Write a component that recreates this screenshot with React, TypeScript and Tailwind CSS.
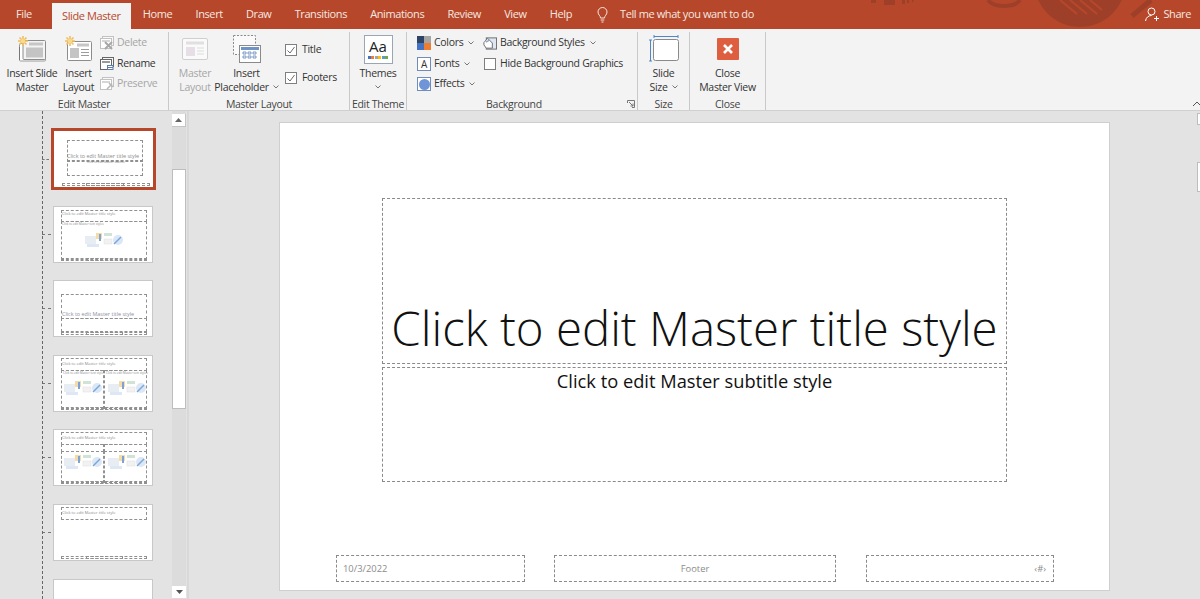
import type { ReactNode } from "react"

const font = { fontFamily: '"Open Sans", "Noto Sans", sans-serif' }

const tabs = ["Home", "Insert", "Draw", "Transitions", "Animations", "Review", "View", "Help"]

function Chevron({ className = "" }: { className?: string }) {
  return (
    <svg width="6" height="4" viewBox="0 0 6 4" className={className}>
      <path d="M0.5 0.5 L3 3 L5.5 0.5" fill="none" stroke="#777" strokeWidth="1" />
    </svg>
  )
}

function Sun({ x, y }: { x: number; y: number }) {
  return (
    <g transform={`translate(${x} ${y})`} stroke="#f0bd5e" strokeWidth="1.6">
      <path d="M5 0V10M0 5H10M1.5 1.5L8.5 8.5M8.5 1.5L1.5 8.5" />
      <circle cx="5" cy="5" r="2.2" fill="#f7d98f" stroke="none" />
    </g>
  )
}

function InsertSlideIcon() {
  return (
    <svg width="30" height="26" viewBox="0 0 30 26">
      <rect x="2.5" y="7.5" width="26" height="17.5" rx="1" fill="#fff" stroke="#9a9a9a" />
      <path d="M2.5 11V24" stroke="#777" />
      <rect x="6" y="4.5" width="22.5" height="19" rx="1" fill="#f4f4f4" stroke="#8c8c8c" />
      <rect x="12" y="6.5" width="14" height="3" fill="#c6c6c6" />
      <rect x="9" y="11.5" width="17" height="10" fill="#c4c4c4" />
      <Sun x={1} y={0} />
    </svg>
  )
}

function InsertLayoutIcon() {
  return (
    <svg width="28" height="26" viewBox="0 0 28 26">
      <rect x="2.5" y="5.5" width="24" height="19" rx="1" fill="#fff" stroke="#8c8c8c" />
      <rect x="12" y="7.5" width="12" height="3" fill="#c6c6c6" />
      <rect x="5" y="12" width="9" height="10" fill="#c4c4c4" />
      <path d="M16 13.5H24M16 16.5H24M16 19.5H24" stroke="#9c9c9c" />
      <Sun x={0} y={0} />
    </svg>
  )
}

function SmallSlideIcon({ mark, dim }: { mark: "x" | "rename" | "pin"; dim?: boolean }) {
  const line = dim ? "#c2c2c2" : "#666"
  return (
    <svg width="14" height="14" viewBox="0 0 14 14">
      <rect x="2.5" y="0.5" width="11" height="9" fill="#f8f8f8" stroke={line} />
      <rect x="0.5" y="2.5" width="11" height="10" fill="#fff" stroke={line} />
      <rect x="2" y="4" width="8" height="2" fill={dim ? "#d6d6d6" : "#9a9a9a"} />
      {mark === "x" && <path d="M5 6L12 13M12 6L5 13" stroke="#a8a8a8" strokeWidth="2" />}
      {mark === "rename" && (
        <>
          <rect x="7" y="8" width="6.5" height="5" fill="#5b7fa8" />
          <path d="M8 9.5H12.5M8 11.5H12.5" stroke="#fff" />
        </>
      )}
      {mark === "pin" && <path d="M7 12L12 7M9 6L13 10" stroke="#b5b5b5" strokeWidth="1.5" />}
    </svg>
  )
}

function MasterLayoutIcon() {
  return (
    <svg width="26" height="22" viewBox="0 0 26 22">
      <rect x="0.5" y="0.5" width="25" height="21" rx="1.5" fill="#fafafa" stroke="#cfcfcf" />
      <rect x="4" y="3.5" width="18" height="3" fill="#e2dfe2" />
      <rect x="4" y="9" width="9" height="9" fill="#e6e0e6" />
      <path d="M15 10H22M15 13H22M15 16H22" stroke="#dcdcdc" />
    </svg>
  )
}

function PlaceholderIcon() {
  return (
    <svg width="28" height="28" viewBox="0 0 28 28">
      <rect x="0.5" y="0.5" width="22" height="19" fill="#fafafa" stroke="#8a8a8a" strokeDasharray="2 1.5" />
      <rect x="6.5" y="10.5" width="21" height="17" fill="#fff" stroke="#8a8a8a" />
      <rect x="8" y="12" width="18" height="3" fill="#6f93c4" />
      <path d="M10 17H13V19H10ZM15 17H18V19H15ZM20 17H23V19H20ZM10 21H13V23H10ZM15 21H18V23H15ZM20 21H23V23H20Z" fill="#fff" stroke="#5d84bb" strokeWidth="0.8" />
    </svg>
  )
}

function CheckBox({ checked }: { checked?: boolean }) {
  return (
    <svg width="12" height="12" viewBox="0 0 12 12" className="shrink-0">
      <rect x="0.5" y="0.5" width="11" height="11" fill="#fff" stroke="#7f7f7f" />
      {checked && <path d="M2.5 6.5L5 9L9.5 3" fill="none" stroke="#6b6b6b" />}
    </svg>
  )
}

function ThemesIcon() {
  const dots = ["#4472c4", "#ed7d31", "#a5a5a5", "#ffc000", "#5b9bd5", "#70ad47"]
  return (
    <div className="w-[29px] h-[29px] border border-[#9aa5b5] bg-white flex flex-col items-center tracking-normal">
      <span className="text-[15px] leading-[18px] mt-[1px] text-[#222]">Aa</span>
      <div className="flex gap-[0.5px] mt-[1px]">
        {dots.map((c) => (
          <span key={c} className="w-[3px] h-[3px]" style={{ backgroundColor: c }} />
        ))}
      </div>
    </div>
  )
}

function ColorsIcon() {
  return (
    <svg width="14" height="14" viewBox="0 0 14 14">
      <rect width="7" height="7" fill="#2f4464" />
      <rect x="7" width="7" height="7" fill="#a5a5a5" />
      <rect y="7" width="7" height="7" fill="#4472c4" />
      <rect x="7" y="7" width="7" height="7" fill="#ed7d31" />
    </svg>
  )
}

function BackgroundStylesIcon() {
  return (
    <svg width="15" height="15" viewBox="0 0 15 15">
      <rect x="3.5" y="1.5" width="11" height="12" fill="#dfe7f2" stroke="#6a6a6a" />
      <path d="M1 6.5L5 2L10 7V12.5H3.5L1 9Z" fill="#fff" stroke="#666" />
      <path d="M3 6L7 4" stroke="#8aa6cc" strokeWidth="1.5" />
    </svg>
  )
}

function SlideSizeIcon() {
  return (
    <svg width="30" height="28" viewBox="0 0 30 28">
      <path d="M5 1.5H29M5 0V3M29 0V3M1.5 5V26M0 5H3M0 26H3" stroke="#4f86c6" fill="none" />
      <rect x="4.5" y="4.5" width="25" height="21" rx="2" fill="#fff" stroke="#8a8a8a" />
    </svg>
  )
}

function CloseIcon() {
  return (
    <svg width="22" height="22" viewBox="0 0 22 22">
      <rect width="22" height="22" rx="1" fill="#dd5f3f" />
      <path d="M7 7L15 15M15 7L7 15" stroke="#fff" strokeWidth="2.6" />
    </svg>
  )
}

function Group({ label, width, children, launcher }: { label: string; width: number; children: ReactNode; launcher?: boolean }) {
  return (
    <div className="relative flex flex-col shrink-0 h-[78px] mt-[3px] border-r border-[#c9c9c9]" style={{ width }}>
      <div className="flex flex-1 min-h-0">{children}</div>
      <div className={`h-[12px] text-center leading-[12px] whitespace-nowrap text-[10.5px] text-[#444] ${launcher ? "pr-[16px]" : ""}`}>{label}</div>
      {launcher && (
        <svg width="8" height="8" viewBox="0 0 8 8" className="absolute right-[2px] bottom-[2px]">
          <path d="M0.5 3V0.5H7.5V7.5H5M2 2L6 6M6 3.5V6H3.5" fill="none" stroke="#777" />
        </svg>
      )}
    </div>
  )
}

function BigButton({ icon, lines, width, dim, chevron, className = "" }: { icon: ReactNode; lines: string[]; width: number; dim?: boolean; chevron?: boolean; className?: string }) {
  return (
    <div className={`flex flex-col items-center shrink-0 leading-[14px] text-[10.5px] ${dim ? "text-[#a6a6a6]" : "text-[#333]"} ${className}`} style={{ width }}>
      <div className="flex items-center justify-center w-full h-[34px]">{icon}</div>
      {lines.map((l, i) => (
        <div key={l} className="whitespace-nowrap flex items-center gap-[4px]">
          {l}
          {chevron && i === lines.length - 1 && <Chevron />}
        </div>
      ))}
    </div>
  )
}

function SmallRow({ icon, label, dim, chevron }: { icon: ReactNode; label: string; dim?: boolean; chevron?: boolean }) {
  return (
    <div className={`flex items-center h-[20.5px] text-[10.5px] whitespace-nowrap ${dim ? "text-[#a6a6a6]" : "text-[#333]"}`}>
      <span className="flex items-center justify-center w-[14px] mr-[3px]">{icon}</span>
      {label}
      {chevron && <Chevron className="ml-[5px]" />}
    </div>
  )
}

function Ribbon() {
  return (
    <div className="flex h-[82px] bg-[#f3f3f3] border-b border-[#d0d0d0] tracking-[-0.3px]">
      <Group label="Edit Master" width={169}>
        <div className="ml-[4px] flex">
          <BigButton width={56} icon={<InsertSlideIcon />} lines={["Insert Slide", "Master"]} />
          <BigButton width={37} icon={<InsertLayoutIcon />} lines={["Insert", "Layout"]} />
        </div>
        <div className="ml-[3px] pt-[1px] flex flex-col">
          <SmallRow dim icon={<SmallSlideIcon mark="x" dim />} label="Delete" />
          <SmallRow icon={<SmallSlideIcon mark="rename" />} label="Rename" />
          <SmallRow dim icon={<SmallSlideIcon mark="pin" dim />} label="Preserve" />
        </div>
      </Group>
      <Group label="Master Layout" width={181}>
        <BigButton dim width={46} className="ml-[3px]" icon={<MasterLayoutIcon />} lines={["Master", "Layout"]} />
        <BigButton width={63} className="-ml-[3px]" chevron icon={<PlaceholderIcon />} lines={["Insert", "Placeholder"]} />
        <div className="ml-[7px] flex flex-col pt-[8px] gap-[8px] text-[10.5px] text-[#333]">
          <div className="flex items-center gap-[5px] h-[20px]"><CheckBox checked />Title</div>
          <div className="flex items-center gap-[5px] h-[20px]"><CheckBox checked />Footers</div>
        </div>
      </Group>
      <Group label="Edit Theme" width={57}>
        <div className="w-full flex flex-col items-center text-[10.5px] leading-[14px] text-[#333]">
          <div className="h-[34px] flex items-center"><ThemesIcon /></div>
          Themes
          <Chevron className="mt-[5px]" />
        </div>
      </Group>
      <Group label="Background" width={231} launcher>
        <div className="ml-[10px] pt-[1px] w-[66px] flex flex-col">
          <SmallRow chevron icon={<ColorsIcon />} label="Colors" />
          <SmallRow
            chevron
            icon={
              <span className="w-[14px] h-[14px] border border-[#6f8db8] bg-white text-[10px] leading-[12px] text-center text-[#333]">A</span>
            }
            label="Fonts"
          />
          <SmallRow
            chevron
            icon={
              <span className="w-[14px] h-[14px] border border-[#6f8db8] bg-white flex items-center justify-center">
                <span className="w-[11px] h-[11px] rounded-full bg-[#6f94d8]" />
              </span>
            }
            label="Effects"
          />
        </div>
        <div className="pt-[1px] flex flex-col">
          <SmallRow chevron icon={<BackgroundStylesIcon />} label="Background Styles" />
          <SmallRow icon={<CheckBox />} label="Hide Background Graphics" />
        </div>
      </Group>
      <Group label="Size" width={52}>
        <BigButton width={51} chevron icon={<SlideSizeIcon />} lines={["Slide", "Size"]} />
      </Group>
      <Group label="Close" width={76}>
        <BigButton width={75} icon={<CloseIcon />} lines={["Close", "Master View"]} />
      </Group>
      <div className="flex-1 relative">
        <svg width="8" height="6" viewBox="0 0 8 6" className="absolute right-0 bottom-[3px]">
          <path d="M1 5L5 1L9 5" fill="none" stroke="#555" />
        </svg>
      </div>
    </div>
  )
}

function TitleBar() {
  return (
    <div className="relative flex items-end h-[29px] bg-[#b7472a] text-[11px] tracking-[-0.4px] text-[#f6e7e1] overflow-hidden">
      {/* pattern behind the tabs */}
      <svg width="330" height="29" viewBox="0 0 330 29" className="absolute left-[870px] top-0">
        <g fill="#9e4029">
          <rect x="14" y="0" width="11" height="5" />
          <rect x="1" y="0" width="5" height="3" />
          <rect x="32" y="0" width="3" height="4" />
          <rect x="37" y="0" width="2" height="3" />
          <rect x="42" y="0" width="1.5" height="2" />
        </g>
        <path d="M118 0A17 9 0 0 0 150 0" fill="none" stroke="#9e4029" strokeWidth="4" />
        <circle cx="210" cy="-19" r="46" fill="#9e4029" />
        <path d="M190 0L207 14M200 0L217 14M210 0L227 14M220 0L232 10" stroke="#b7472a" strokeWidth="2" />
        <path d="M262 16L281 0" stroke="#9e4029" strokeWidth="5" />
      </svg>
      <div className="relative flex items-center h-[29px]">
        <div className="pl-[16px] pr-[20px]">File</div>
        <div className="flex items-center justify-center self-end h-[26px] w-[79px] bg-[#f3f3f3] text-[#b7472a]">Slide Master</div>
        <div className="flex ml-[12px] gap-[23.2px]">
          {tabs.map((t) => (
            <div key={t}>{t}</div>
          ))}
        </div>
        <svg width="11" height="16" viewBox="0 0 11 16" className="ml-[25px]">
          <path d="M3.5 11C3.5 8.5 1 8 1 5A4.5 4.5 0 0 1 10 5C10 8 7.5 8.5 7.5 11ZM3.7 13H7.3M4.5 15H6.5" fill="none" stroke="#f6e7e1" />
        </svg>
        <div className="ml-[12px]">Tell me what you want to do</div>
      </div>
      <div className="relative ml-auto mr-[9px] flex items-center gap-[4px] h-[29px]">
        <svg width="14" height="15" viewBox="0 0 14 15">
          <circle cx="6.5" cy="4.5" r="3.5" fill="none" stroke="#fff" />
          <path d="M0.5 14C1 10.5 3.5 8.5 6.5 8.5M9 11.5H14M11.5 9V14" fill="none" stroke="#fff" />
        </svg>
        Share
      </div>
    </div>
  )
}

function Box({ className }: { className: string }) {
  return <div className={`absolute border border-dashed border-[#909090] ${className}`} />
}

function MiniPicture({ className }: { className: string }) {
  return (
    <svg width="38" height="16" viewBox="0 0 38 16" className={`absolute ${className}`}>
      <rect x="0" y="4" width="11" height="8" fill="#e8edf4" />
      <rect x="11" y="1" width="6" height="6" fill="#f3dca6" />
      <rect x="14" y="2" width="2" height="7" fill="#7da3d6" />
      <rect x="19" y="1" width="8" height="3" fill="#cfe3d6" />
      <rect x="19" y="7" width="8" height="5" fill="#f2f2f2" stroke="#ddd" strokeWidth="0.5" />
      <circle cx="33" cy="8" r="5" fill="#dbe7f5" />
      <path d="M29 12L36 5" stroke="#79a6dc" strokeWidth="1.5" />
      <rect x="2" y="12" width="12" height="3" fill="#dde8f4" />
    </svg>
  )
}

function MiniText({ className, children }: { className: string; children: string }) {
  return <div className={`absolute whitespace-nowrap text-[#8a8a8a] ${className}`}>{children}</div>
}

function MiniFooter() {
  return (
    <>
      <Box className="left-[7px] right-[5px] bottom-[1px] h-[3px]" />
      <Box className="left-[32px] w-[37px] bottom-[1px] h-[3px]" />
    </>
  )
}

const miniTitle = "Click to edit Master title style"
const miniBody = "Click to edit Master text styles"

function Thumb({ variant }: { variant: number }) {
  return (
    <div className="relative w-[100px] h-[57px] shrink-0 bg-white border border-[#c8c8c8]">
      {variant === 1 && (
        <>
          <Box className="left-[7px] right-[5px] top-[3px] h-[12px]" />
          <MiniText className="left-[8px] top-[4px] text-[4px]">{miniTitle}</MiniText>
          <Box className="left-[7px] right-[5px] top-[14px] bottom-[2px]" />
          <MiniText className="left-[8px] top-[15px] text-[3px]">{miniBody}</MiniText>
          <MiniPicture className="left-[31px] top-[25px]" />
          <MiniFooter />
        </>
      )}
      {variant === 2 && (
        <>
          <Box className="left-[7px] right-[5px] top-[13px] h-[25px]" />
          <MiniText className="left-[8px] top-[29px] text-[5.4px] text-[#8d8fa0]">{miniTitle}</MiniText>
          <Box className="left-[7px] right-[5px] top-[37px] h-[14px]" />
          <MiniFooter />
        </>
      )}
      {variant === 3 && (
        <>
          <Box className="left-[7px] right-[5px] top-[2px] h-[13px]" />
          <MiniText className="left-[8px] top-[5px] text-[4px]">{miniTitle}</MiniText>
          <Box className="left-[7px] w-[43px] top-[14px] bottom-[2px]" />
          <Box className="left-[50px] right-[5px] top-[14px] bottom-[2px]" />
          <MiniText className="left-[9px] top-[15px] text-[3px]">{miniBody}</MiniText>
          <MiniText className="left-[52px] top-[15px] text-[3px]">{miniBody}</MiniText>
          <MiniPicture className="left-[10px] top-[24px]" />
          <MiniPicture className="left-[54px] top-[24px]" />
          <MiniFooter />
        </>
      )}
      {variant === 4 && (
        <>
          <Box className="left-[7px] right-[5px] top-[2px] h-[13px]" />
          <MiniText className="left-[8px] top-[5px] text-[4px]">{miniTitle}</MiniText>
          <Box className="left-[7px] w-[43px] top-[14px] h-[8px]" />
          <Box className="left-[50px] right-[5px] top-[14px] h-[8px]" />
          <Box className="left-[7px] w-[43px] top-[21px] bottom-[2px]" />
          <Box className="left-[50px] right-[5px] top-[21px] bottom-[2px]" />
          <MiniPicture className="left-[10px] top-[24px]" />
          <MiniPicture className="left-[54px] top-[24px]" />
          <MiniFooter />
        </>
      )}
      {variant === 5 && (
        <>
          <Box className="left-[7px] right-[5px] top-[2px] h-[13px]" />
          <MiniText className="left-[8px] top-[5px] text-[4px]">{miniTitle}</MiniText>
          <MiniFooter />
        </>
      )}
    </div>
  )
}

function ThumbRow({ children, tick = 11, className = "" }: { children: ReactNode; tick?: number; className?: string }) {
  return (
    <div className={`flex items-center ${className}`}>
      <div className="shrink-0 pr-[2px]" style={{ width: tick }}>
        <div className="border-t border-dashed border-[#777]" />
      </div>
      {children}
    </div>
  )
}

function ThumbPanel() {
  return (
    <div className="relative w-[172px] shrink-0 overflow-hidden">
      <div className="absolute left-[42px] top-0 bottom-0 border-l border-dashed border-[#666]" />
      <div className="flex flex-col gap-[17.6px] pl-[42px] pt-[17px]">
        <ThumbRow tick={9} className="-mb-[2px]">
          <div className="relative w-[105px] h-[62px] border-[3px] border-[#b7472a] bg-white shrink-0">
            <Box className="left-[13px] w-[76px] top-[9px] h-[36px]" />
            <Box className="left-[13px] w-[76px] top-[29px] h-[0px]" />
            <MiniText className="left-[13px] top-[21px] text-[5.4px]">{miniTitle}</MiniText>
            <MiniText className="left-[33px] top-[29px] text-[3px]">Click to edit Master subtitle</MiniText>
            <Box className="left-[8px] w-[88px] bottom-[1px] h-[3px]" />
            <Box className="left-[32px] w-[38px] bottom-[1px] h-[3px]" />
          </div>
        </ThumbRow>
        {[1, 2, 3, 4, 5].map((v) => (
          <ThumbRow key={v}><Thumb variant={v} /></ThumbRow>
        ))}
        <ThumbRow><div className="w-[100px] h-[57px] shrink-0 bg-white border border-[#c8c8c8]" /></ThumbRow>
      </div>
    </div>
  )
}

function ThumbScroll() {
  return (
    <div className="flex flex-col w-[14px] h-full shrink-0 bg-[#dcdcdc]">
      <div className="mt-[3px] h-[13px] bg-white border-r border-b border-[#c4c4c4] flex items-center justify-center">
        <svg width="7" height="4" viewBox="0 0 7 4"><path d="M0 4L3.5 0L7 4Z" fill="#666" /></svg>
      </div>
      <div className="mt-[42px] h-[240px] bg-white border border-[#bdbdbd]" />
      <div className="mt-auto mb-[1px] h-[12px] bg-white flex items-center justify-center">
        <svg width="7" height="4" viewBox="0 0 7 4"><path d="M0 0L3.5 4L7 0Z" fill="#555" /></svg>
      </div>
    </div>
  )
}

function SlideCanvas() {
  return (
    <div className="flex-1 min-w-0 pt-[11px] pl-[90px] bg-[#e3e3e3]">
      <div className="relative w-[831px] h-[469px] bg-white border border-[#cfcfcf]">
        <div className="absolute left-[102px] top-[75px] w-[625px] h-[166px] border border-dashed border-[#8a8a8a] flex items-end justify-center overflow-hidden">
          <span className="text-[47.4px] font-light leading-[70px] whitespace-nowrap text-[#111]">Click to edit Master title style</span>
        </div>
        <div className="absolute left-[102px] top-[244px] w-[625px] h-[115px] border border-dashed border-[#8a8a8a] text-center text-[18.3px] leading-[26px] text-[#111]">
          Click to edit Master subtitle style
        </div>
        <div className="absolute left-[56px] top-[432px] w-[189px] h-[27px] border border-dashed border-[#8a8a8a] pl-[6px] text-[9.4px] leading-[25px] text-[#8c8c8c]">10/3/2022</div>
        <div className="absolute left-[274px] top-[432px] w-[282px] h-[27px] border border-dashed border-[#8a8a8a] text-center text-[9.4px] leading-[25px] text-[#8c8c8c]">Footer</div>
        <div className="absolute left-[586px] top-[432px] w-[188px] h-[27px] border border-dashed border-[#8a8a8a] pr-[7px] text-right text-[9.4px] leading-[25px] text-[#8c8c8c]">‹#›</div>
      </div>
    </div>
  )
}

export default function App() {
  return (
    <div className="flex flex-col w-[1200px] h-[599px] overflow-hidden bg-[#e3e3e3]" style={font}>
      <TitleBar />
      <Ribbon />
      <div className="flex flex-1 min-h-0">
        <ThumbPanel />
        <ThumbScroll />
        <div className="w-[1px] shrink-0 bg-[#e3e3e3]" />
        <div className="w-[2px] shrink-0 bg-[#d8d8d8]" />
        <SlideCanvas />
        <div className="flex flex-col w-[3px] shrink-0 bg-[#e3e3e3]">
          <div className="mt-[2px] h-[12px] bg-white border-l border-y border-[#bdbdbd]" />
          <div className="mt-[37px] h-[30px] bg-white border-l border-y border-[#bdbdbd]" />
        </div>
      </div>
    </div>
  )
}
